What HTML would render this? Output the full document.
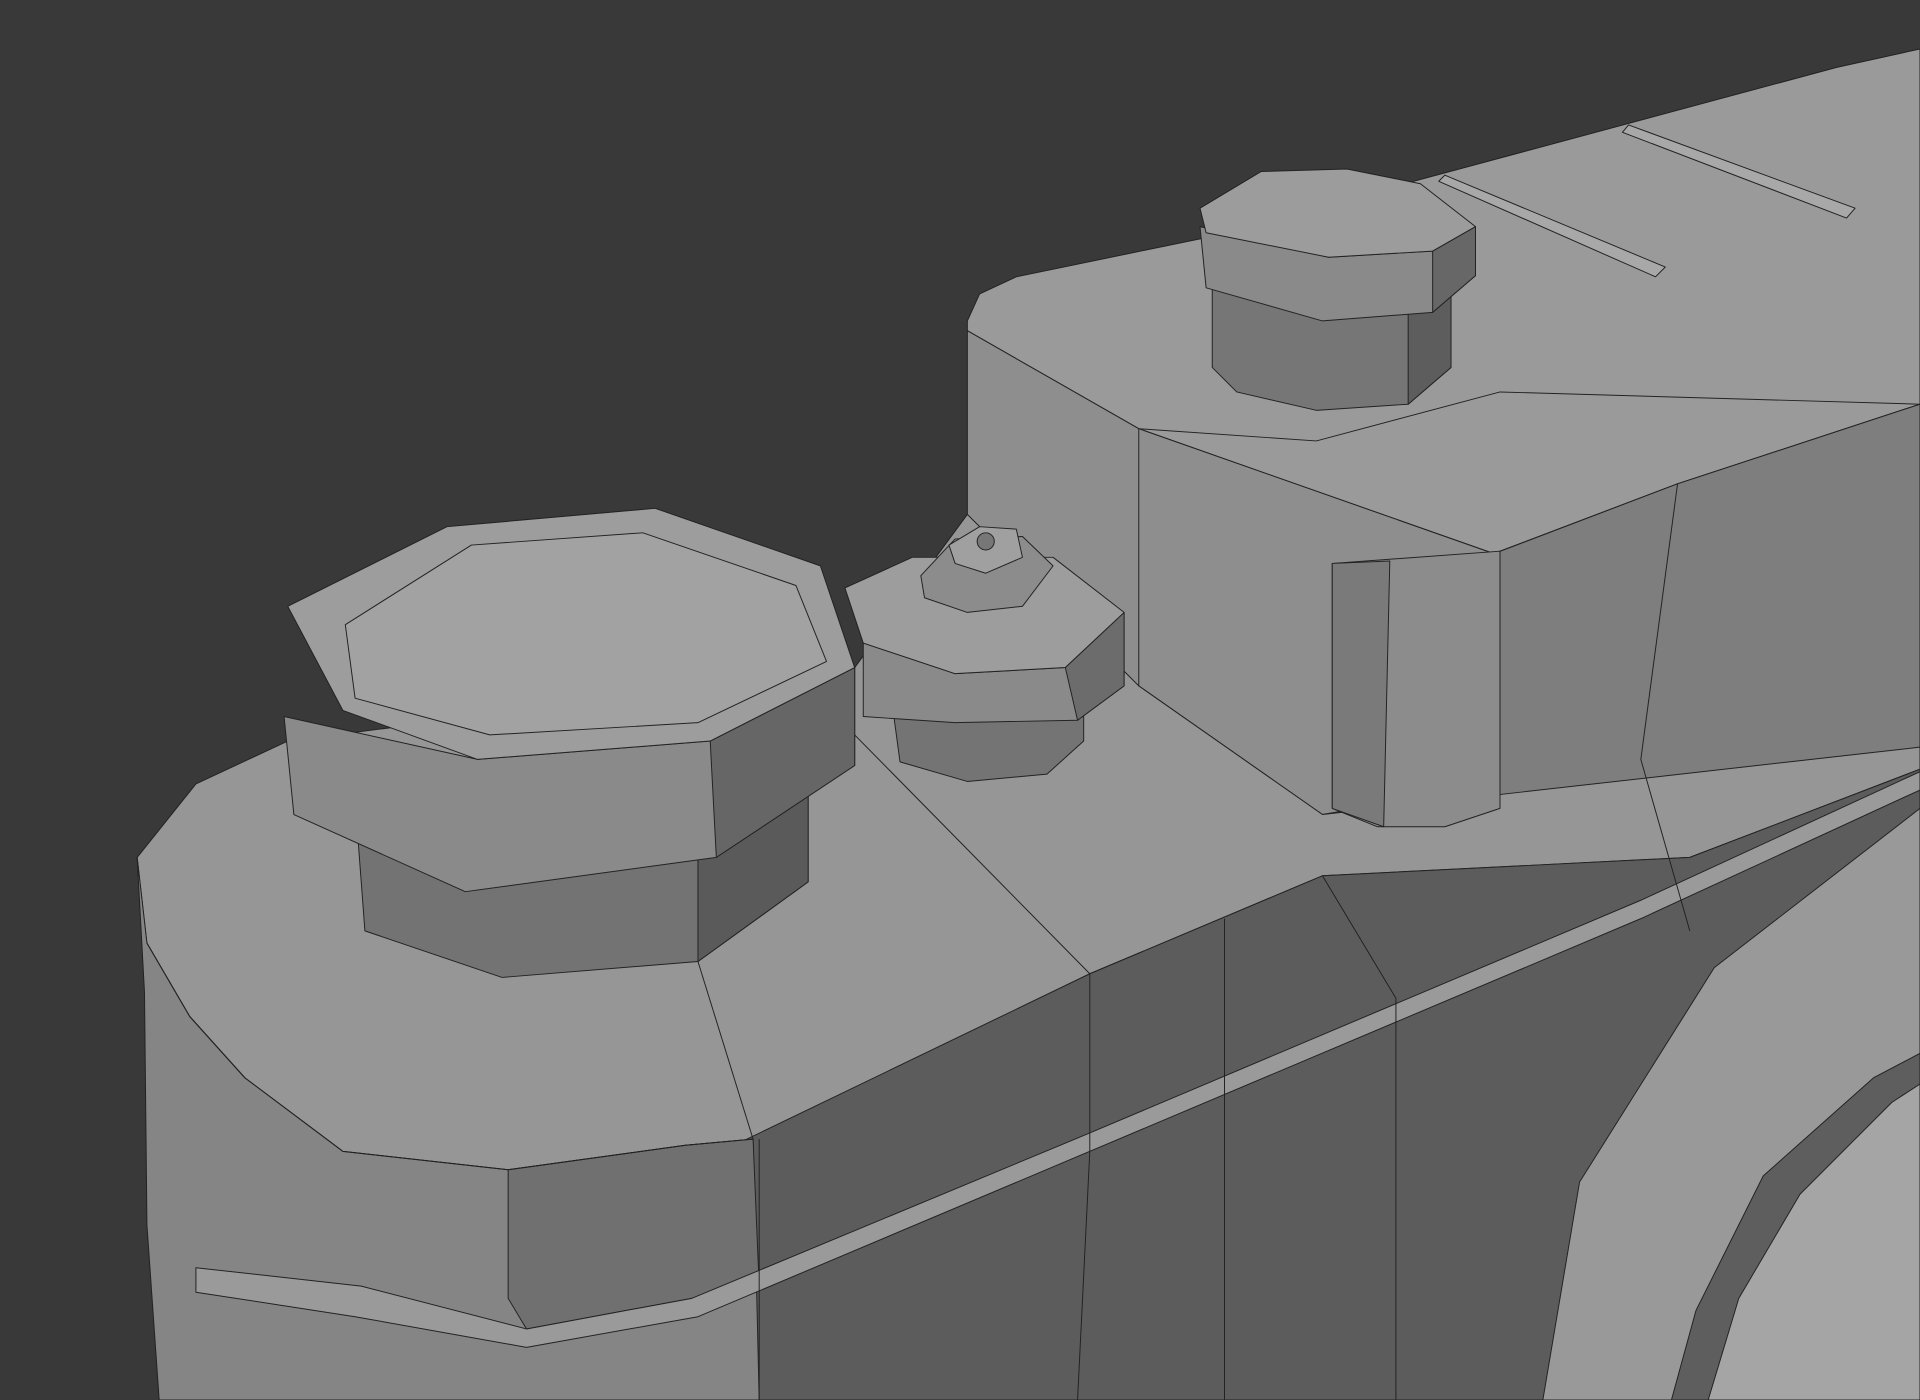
<!DOCTYPE html>
<html><head><style>html,body{margin:0;padding:0;background:#393939;overflow:hidden}svg{display:block}</style></head>
<body>
<svg width="1920" height="1400" viewBox="0 0 1568 1143" preserveAspectRatio="none" xmlns="http://www.w3.org/2000/svg">
<g stroke="#222" stroke-width="0.8" stroke-linejoin="round">
<rect x="0" y="0" width="1568" height="1143" fill="#393939" stroke="none"/>
<polygon points="790,262 800,240 830,226 980,195 1500,55 1568,40 1568,330 1370,395 1220,452 930,350 790,270" fill="#9a9a9a"/>
<polygon points="1325,108 1330,102 1515,170 1508,178" fill="#a8a8a8"/>
<polygon points="1175,148 1180,143 1360,218 1352,226" fill="#a8a8a8"/>
<polyline points="930,350 1075,360 1225,320 1568,330" fill="none"/>
<polygon points="790,270 930,350 1220,452 1370,395 1568,330 1568,620 1340,620 1080,665 930,560 790,420" fill="#8e8e8e"/>
<polygon points="1220,452 1370,395 1568,330 1568,620 1200,670" fill="#7e7e7e"/>
<polygon points="112,700 160,640 235,605 698,545 790,420 930,560 1080,665 1568,610 1568,628 1380,700 1080,715 890,795 620,930 560,935 415,955 280,940 200,880 155,830 120,770" fill="#969696"/>
<polygon points="610,930 890,795 1080,715 1380,700 1568,628 1568,1143 610,1143" fill="#5c5c5c"/>
<polygon points="112,700 120,770 155,830 200,880 280,940 415,955 560,935 615,930 620,1143 130,1143 120,1000 118,810" fill="#858585"/>
<polygon points="415,955 560,935 615,930 620,1050 565,1060 430,1085 415,1060" fill="#707070"/>
<polygon points="160,1035 295,1050 430,1085 565,1060 890,925 1340,735 1568,630 1568,645 1340,750 890,940 570,1075 430,1100 290,1075 160,1055" fill="#9a9a9a"/>
<polygon points="1260,1143 1290,965 1400,790 1568,660 1568,1143" fill="#999"/>
<polygon points="1365,1143 1385,1070 1440,960 1530,880 1568,860 1568,1143" fill="#5e5e5e"/>
<polygon points="1395,1143 1420,1060 1470,975 1545,900 1568,885 1568,1143" fill="#a5a5a5"/>
<polyline points="570,785 615,930" fill="none"/>
<polyline points="698,600 890,795" fill="none"/>
<polygon points="292,680 660,640 660,720 570,785 410,798 298,760" fill="#737373"/>
<polygon points="570,700 660,640 660,720 570,785" fill="#5a5a5a"/>
<polygon points="232,585 390,620 580,605 698,545 698,625 585,700 380,728 240,665" fill="#8a8a8a"/>
<polygon points="580,605 698,545 698,625 585,700" fill="#666"/>
<polygon points="235,495 365,430 535,415 670,462 698,545 580,605 390,620 280,580" fill="#9d9d9d"/>
<polygon points="282,510 385,445 525,435 650,478 675,540 570,590 400,600 290,570" fill="#a2a2a2"/>
<polygon points="730,585 885,585 885,605 855,632 790,638 735,622" fill="#747474"/>
<polygon points="705,525 780,550 870,545 918,500 918,560 880,588 780,590 705,585" fill="#8a8a8a"/>
<polygon points="870,545 918,500 918,560 880,588" fill="#6c6c6c"/>
<polygon points="690,480 745,455 860,455 918,500 870,545 780,550 705,525" fill="#9d9d9d"/>
<polygon points="752,470 780,440 835,438 860,462 835,495 790,500 755,488" fill="#8c8c8c"/>
<polygon points="775,445 800,430 830,432 835,455 805,468 780,460" fill="#a0a0a0"/>
<circle cx="805" cy="442" r="7" fill="#777"/>
<polygon points="990,235 1185,235 1185,300 1150,330 1075,335 1010,320 990,300" fill="#767676"/>
<polygon points="1150,240 1185,235 1185,300 1150,330" fill="#5d5d5d"/>
<polygon points="980,185 1085,210 1170,205 1205,185 1205,225 1170,255 1080,262 985,235" fill="#8a8a8a"/>
<polygon points="1170,205 1205,185 1205,225 1170,255" fill="#676767"/>
<polygon points="980,170 1030,140 1100,138 1160,150 1205,185 1170,205 1085,210 985,190" fill="#9c9c9c"/>
<polygon points="1088,460 1225,450 1225,660 1180,675 1125,675 1088,660" fill="#8c8c8c"/>
<polygon points="1088,460 1135,458 1130,675 1088,660" fill="#7a7a7a"/>
<polyline points="120,770 155,830 200,880 280,940 415,955 560,935 615,930" fill="none"/>
<polyline points="890,795 890,940 880,1143" fill="none"/>
<polyline points="1000,750 1000,1143" fill="none"/>
<polyline points="1080,715 1140,815 1140,1143" fill="none"/>
<polyline points="620,930 620,1143" fill="none"/>
<polyline points="1370,395 1340,620 1380,760" fill="none"/>
<polyline points="930,350 930,560" fill="none"/>
</g>
</svg>
</body></html>
